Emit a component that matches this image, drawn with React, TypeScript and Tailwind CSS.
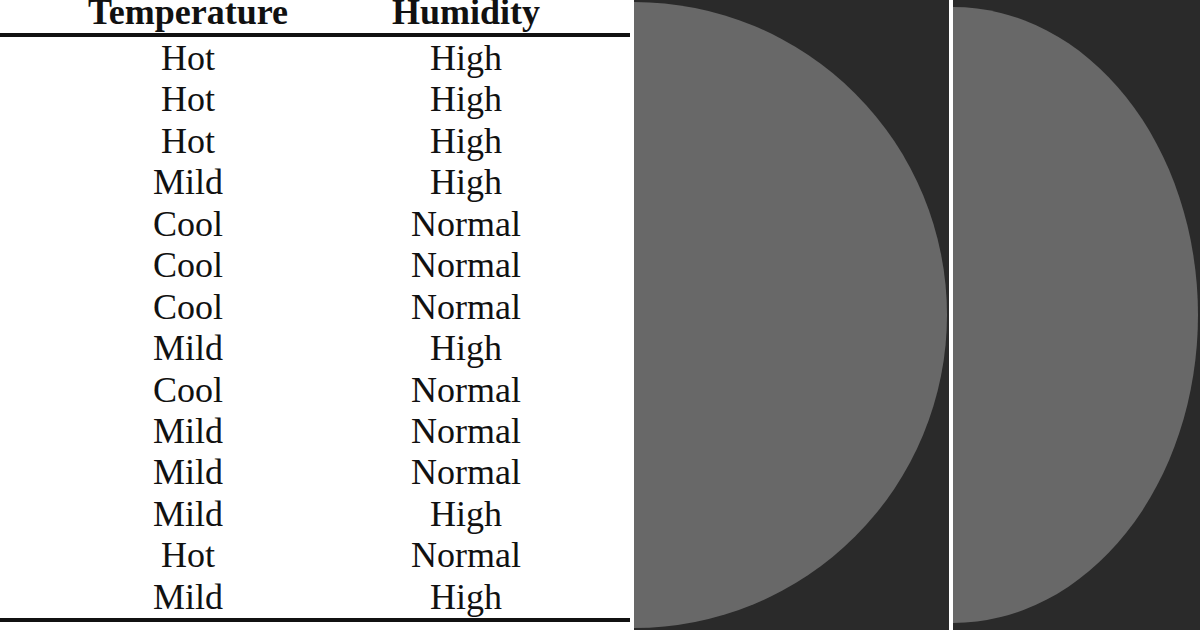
const rows: [string, string][] = [
  ['Hot', 'High'],
  ['Hot', 'High'],
  ['Hot', 'High'],
  ['Mild', 'High'],
  ['Cool', 'Normal'],
  ['Cool', 'Normal'],
  ['Cool', 'Normal'],
  ['Mild', 'High'],
  ['Cool', 'Normal'],
  ['Mild', 'Normal'],
  ['Mild', 'Normal'],
  ['Mild', 'High'],
  ['Hot', 'Normal'],
  ['Mild', 'High'],
]

function Table() {
  return (
    <div className="w-[634px] shrink-0 overflow-hidden bg-white text-[36px] text-[#111] [font-family:'Liberation_Serif',serif]">
      <div className="-mt-[8px] w-[630px]">
        <div className="grid h-[45px] grid-cols-[376px_180px_1fr] border-b-4 border-[#111] font-bold leading-[41px]">
          <div className="text-center">Temperature</div>
          <div className="text-center">Humidity</div>
          <div />
        </div>
        <div className="pt-[1px]">
          {rows.map(([temp, hum], i) => (
            <div key={i} className="grid h-[41.45px] grid-cols-[376px_180px_1fr] leading-[41px]">
              <div className="text-center">{temp}</div>
              <div className="text-center">{hum}</div>
              <div />
            </div>
          ))}
        </div>
        <div className="h-[4px] border-t-4 border-[#111]" />
      </div>
    </div>
  )
}

function HalfDisc({ width, rx, ry }: { width: number; rx: number; ry: number }) {
  return (
    <svg width={width} height={630} viewBox={`0 0 ${width} 630`} className="block">
      <rect width={width} height={630} fill="#2a2a2a" />
      <ellipse cx={0} cy={315} rx={rx} ry={ry} fill="#686868" />
    </svg>
  )
}

export default function App() {
  return (
    <div className="flex h-[630px] w-[1200px] overflow-hidden bg-white">
      <Table />
      <div className="w-[315px] shrink-0">
        <HalfDisc width={315} rx={313} ry={313} />
      </div>
      <div className="w-[4px] shrink-0 bg-white" />
      <div className="w-[247px] shrink-0">
        <HalfDisc width={247} rx={245} ry={308} />
      </div>
    </div>
  )
}
